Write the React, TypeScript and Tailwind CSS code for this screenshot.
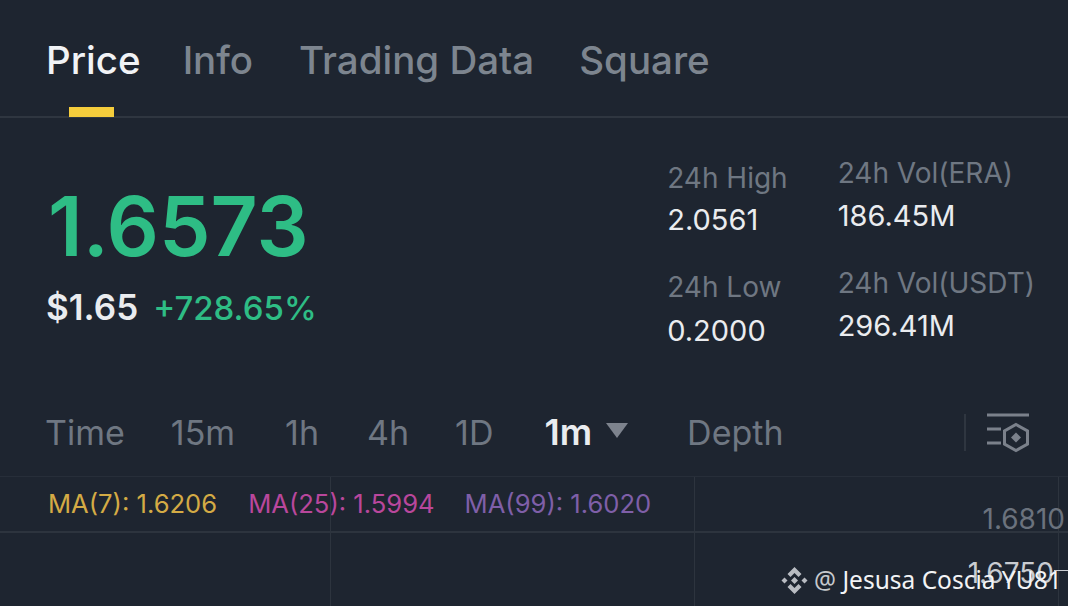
import React from "react";

const Tab = ({ label, active, className }: { label: string; active?: boolean; className: string }) => (
  <div className={`relative h-full flex items-center pt-[6px] ${className}`}>
    <span className={active ? "text-[#f1f3f6]" : "text-[#7d858f]"}>{label}</span>
    {active && <span className="absolute -bottom-[1px] left-[23px] w-[45px] h-[10px] bg-[#f5cd3c]" />}
  </div>
);

const Stat = ({ label, value, className = "", gap = "mt-[10px]" }: { label: string; value: string; className?: string; gap?: string }) => (
  <div className={className}>
    <div className="text-[28px] leading-[32px] text-[#6f7782] whitespace-nowrap">{label}</div>
    <div className={`text-[29px] leading-[32px] text-[#eaecef] whitespace-nowrap ${gap}`}>{value}</div>
  </div>
);

export default function App() {
  return (
    <div
      className="w-[1068px] h-[606px] overflow-hidden bg-[#1e2530] flex flex-col relative"
      style={{ fontFamily: '"Inter", "Liberation Sans", sans-serif' }}
    >
      <div className="h-[118px] shrink-0 border-b-2 border-[#2f3640] flex items-stretch pl-[46px] text-[38.5px] font-medium">
        <Tab label="Price" active className="mr-[42px]" />
        <Tab label="Info" className="mr-[46px]" />
        <Tab label="Trading Data" className="mr-[45px]" />
        <Tab label="Square" className="" />
      </div>

      <div className="h-[282px] shrink-0 flex justify-between pl-[46px] pr-[33px]">
        <div className="pt-[64px]">
          <div className="ml-[2px] text-[82px] leading-[90px] font-semibold text-[#2ebd85]">1.6573</div>
          <div className="flex items-baseline gap-[15px] mt-[15px] whitespace-nowrap">
            <span className="text-[35px] leading-[40px] font-semibold text-[#eaecef]">$1.65</span>
            <span className="text-[33px] leading-[40px] font-medium text-[#2ebd85]">+728.65%</span>
          </div>
        </div>
        <div className="flex gap-[50px] pt-[44px]">
          <div>
            <Stat label="24h High" value="2.0561" />
            <Stat label="24h Low" value="0.2000" className="mt-[35px]" gap="mt-[12px]" />
          </div>
          <div className="-mt-[5px]">
            <Stat label="24h Vol(ERA)" value="186.45M" gap="mt-[11px]" />
            <Stat label="24h Vol(USDT)" value="296.41M" className="mt-[35px]" gap="mt-[11px]" />
          </div>
        </div>
      </div>

      <div className="h-[77px] shrink-0 flex items-center pl-[45px] pb-[12px] pr-[39px] text-[34px] text-[#6f7782] border-b border-[#272e39]">
        <span className="mr-[46px]">Time</span>
        <span className="mr-[50px]">15m</span>
        <span className="mr-[48px]">1h</span>
        <span className="mr-[46px]">4h</span>
        <span className="mr-[51px]">1D</span>
        <span className="text-[36px] font-semibold text-[#eaecef] mr-[14px]">1m</span>
        <svg width="22" height="16" viewBox="0 0 22 16" className="mr-[59px] -mt-[3px]">
          <path d="M0 0H22L11 15Z" fill="#7d838d" />
        </svg>
        <span>Depth</span>
        <span className="ml-auto w-[2px] h-[37px] bg-[#2f3640] mr-[21px]" />
        <svg width="42" height="40" viewBox="0 0 42 40" fill="none" className="mt-[2px]">
          <path d="M0 2H42" stroke="#7b818b" strokeWidth="3" />
          <path d="M0 16H14M0 30H14" stroke="#7b818b" strokeWidth="3" />
          <path d="M29 11.5L40.5 18V31L29 37.5L17.5 31V18Z" stroke="#7b818b" strokeWidth="3" />
          <path d="M29 19.5L34 24.5L29 29.5L24 24.5Z" fill="#7b818b" />
        </svg>
      </div>

      <div className="relative flex-1">
        <div className="h-[56px] border-b-2 border-[#2d343e] flex items-center pl-[48px] text-[25.6px] whitespace-nowrap">
          <span className="text-[#d4ab45] mr-[31px]">MA(7): 1.6206</span>
          <span className="text-[#b9479c] mr-[30px]">MA(25): 1.5994</span>
          <span className="text-[#7f5fa8]">MA(99): 1.6020</span>
        </div>
        <div className="absolute top-0 bottom-0 left-[330px] w-[1px] bg-[#2d343e]" />
        <div className="absolute top-0 bottom-0 left-[694px] w-[1px] bg-[#2d343e]" />
        <div className="absolute top-0 bottom-0 left-[1058px] w-[1px] bg-[#2d343e]" />
        <div className="absolute right-[3px] top-[27px] text-[28px] leading-[30px] text-[#6b727d]">1.6810</div>
        <div className="absolute right-[14px] top-[81px] text-[28px] leading-[30px] text-[#c9ccd1]">1.6750</div>
        <div className="absolute right-0 top-[93px] w-[14px] h-[1px] bg-[#c9ccd1]" />
        <div className="absolute left-[781px] top-[88px] flex items-center gap-[6px] text-[#f2f3f5] whitespace-nowrap text-[24.5px] leading-[30px]" style={{ fontFamily: '"Noto Sans", sans-serif' }}>
          <svg width="27" height="27" viewBox="0 0 27 27" fill="#b9bcc2">
            <path d="M13.5 0L20.5 7L17.5 10L13.5 6L9.5 10L6.5 7Z" />
            <path d="M13.5 27L6.5 20L9.5 17L13.5 21L17.5 17L20.5 20Z" />
            <path d="M3.5 10.5L6.5 13.5L3.5 16.5L0.5 13.5Z" />
            <path d="M23.5 10.5L26.5 13.5L23.5 16.5L20.5 13.5Z" />
            <path d="M13.5 10L17 13.5L13.5 17L10 13.5Z" />
          </svg>
          <span><span className="text-[#c6c9ce]">@</span> Jesusa Coscia YU81</span>
        </div>
      </div>
    </div>
  );
}
